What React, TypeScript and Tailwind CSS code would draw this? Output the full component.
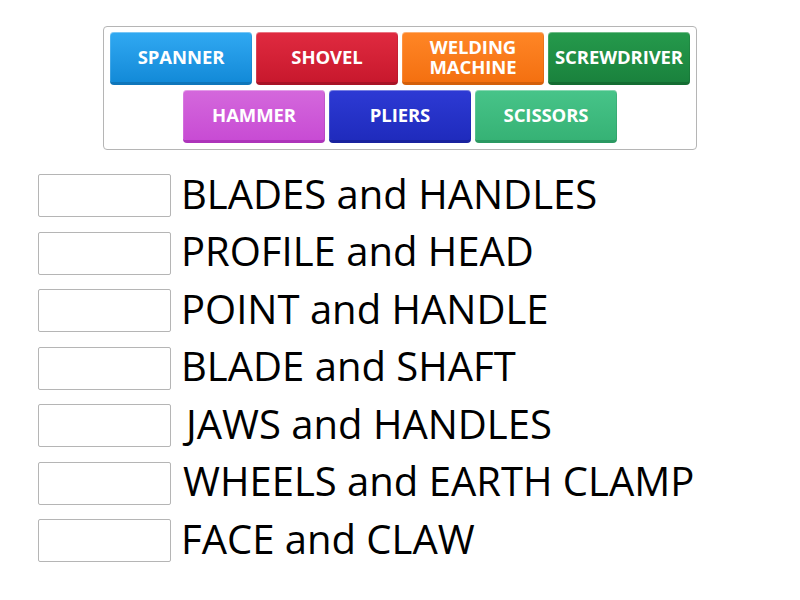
import React from 'react';

const tiles = [
  { label: 'SPANNER', cls: 'from-[#30a9f2] to-[#128ad8] border-b-[#0f76ba]' },
  { label: 'SHOVEL', cls: 'from-[#e02a40] to-[#c8182d] border-b-[#a81326]' },
  { label: 'WELDING MACHINE', cls: 'from-[#ff8625] to-[#f47010] border-b-[#d45f0a]' },
  { label: 'SCREWDRIVER', cls: 'from-[#259a4c] to-[#1a823d] border-b-[#146d32]' },
];

const tiles2 = [
  { label: 'HAMMER', cls: 'from-[#d468dc] to-[#c84bd4] border-b-[#ad34ba]' },
  { label: 'PLIERS', cls: 'from-[#2d3ad4] to-[#1f2bbd] border-b-[#18229e]' },
  { label: 'SCISSORS', cls: 'from-[#47c489] to-[#36b275] border-b-[#2b9962]' },
];

const answers = [
  { text: 'BLADES and HANDLES', pad: '' },
  { text: 'PROFILE and HEAD', pad: '' },
  { text: 'POINT and HANDLE', pad: '' },
  { text: 'BLADE and SHAFT', pad: '' },
  { text: 'JAWS and HANDLES', pad: 'pl-[5px]' },
  { text: 'WHEELS and EARTH CLAMP', pad: 'pl-[2px]' },
  { text: 'FACE and CLAW', pad: '' },
];

function Tile({ label, cls }: { label: string; cls: string }) {
  return (
    <div
      className={`w-[142px] h-[53px] rounded-[4px] bg-gradient-to-b ${cls} border-b-[3px] shadow-[inset_0_1px_0_rgba(255,255,255,0.35),inset_1px_0_0_rgba(255,255,255,0.15),inset_-1px_0_0_rgba(0,0,0,0.08)] flex items-center justify-center text-center text-white font-bold text-[18.5px] leading-[20px] tracking-[-0.1px]`}
    >
      {label}
    </div>
  );
}

export default function App() {
  return (
    <div className="w-[800px] h-[600px] bg-white font-['Open_Sans',sans-serif] text-black">
      <div className="pt-[26px] flex justify-center">
        <div className="w-[594px] border border-[#b5b5b5] rounded-[4px] px-[6px] pt-[5px] pb-[6px] flex flex-col items-center gap-[5px]">
          <div className="flex gap-[4px]">
            {tiles.map(t => <Tile key={t.label} {...t} />)}
          </div>
          <div className="flex gap-[4px]">
            {tiles2.map(t => <Tile key={t.label} {...t} />)}
          </div>
        </div>
      </div>

      <div className="mt-[24px] pl-[38px] flex flex-col gap-[14.5px]">
        {answers.map(a => (
          <div key={a.text} className="flex items-center h-[43px]">
            <div className="w-[133px] h-[43px] border border-[#b5b5b5] rounded-[2px] bg-white shrink-0" />
            <span className={`ml-[10px] mb-[5px] text-[40px] leading-[43px] whitespace-nowrap ${a.pad}`}>{a.text}</span>
          </div>
        ))}
      </div>
    </div>
  );
}
